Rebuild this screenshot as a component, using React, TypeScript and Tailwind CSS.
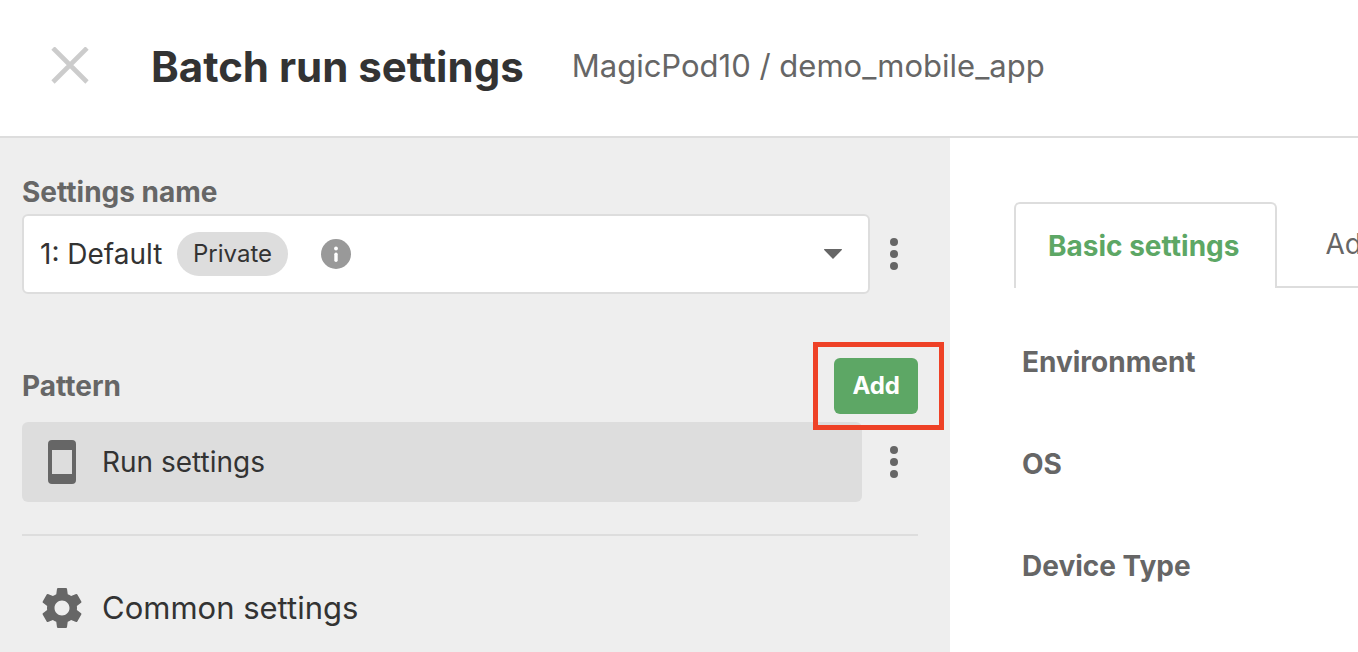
import { useState } from "react";
import type { ReactNode } from "react";
import { MdSettings } from "react-icons/md";

const fields = ["Environment", "OS", "Device Type"];

function KebabButton({ label }: { label: string }) {
  return (
    <button
      type="button"
      aria-label={label}
      className="flex h-20 w-12 shrink-0 items-center justify-center text-[#666]"
    >
      <svg width="8" height="32" viewBox="0 0 8 32" fill="currentColor">
        <circle cx="4" cy="4" r="4" />
        <circle cx="4" cy="16" r="4" />
        <circle cx="4" cy="28" r="4" />
      </svg>
    </button>
  );
}

function PhoneIcon() {
  return (
    <svg width="28" height="44" viewBox="0 0 28 44" fill="currentColor">
      <path
        fillRule="evenodd"
        d="M4 0h20a4 4 0 0 1 4 4v36a4 4 0 0 1-4 4H4a4 4 0 0 1-4-4V4a4 4 0 0 1 4-4zM4 10v24h20V10z"
      />
    </svg>
  );
}

function InfoIcon() {
  return (
    <svg width="30" height="30" viewBox="0 0 30 30">
      <circle cx="15" cy="15" r="15" fill="#999" />
      <circle cx="15" cy="9.5" r="1.9" fill="#fff" />
      <path d="M15 15.2v6" stroke="#fff" strokeWidth="3.4" strokeLinecap="round" />
    </svg>
  );
}

function IconSlot({ children }: { children: ReactNode }) {
  return (
    <span className="flex w-20 shrink-0 justify-center text-[#666]">
      {children}
    </span>
  );
}

export default function App() {
  const [setting, setSetting] = useState("1");

  return (
    <div className="flex min-h-screen flex-col overflow-hidden bg-white font-['Inter',sans-serif] text-[28px] text-[#333]">
      <header className="flex h-[138px] shrink-0 items-center border-b-2 border-[#ddd] pb-1 pl-[51px]">
        <button type="button" aria-label="Close" className="mr-[62px] text-[#ccc]">
          <svg width="38" height="38" viewBox="0 0 38 38" fill="none">
            <path d="M2 1l34 34M36 1L2 35" stroke="currentColor" strokeWidth="4.6" />
          </svg>
        </button>
        <h1 className="mr-12 whitespace-nowrap text-[42px] font-bold">
          Batch run settings
        </h1>
        <p className="whitespace-nowrap text-[31px] text-[#666]">
          MagicPod10 / demo_mobile_app
        </p>
      </header>

      <div className="flex flex-1">
        <aside className="min-w-0 flex-1 bg-[#eee] pt-8 pr-8 pl-[22px]">
          <label
            htmlFor="settings-name"
            className="block leading-[44px] font-bold text-[#666]"
          >
            Settings name
          </label>
          <div className="flex">
            <div className="relative flex-1">
              <select
                id="settings-name"
                value={setting}
                onChange={(e) => setSetting(e.target.value)}
                className="h-20 w-full appearance-none rounded-md border-2 border-[#ddd] bg-white px-4"
              >
                <option value="1">1: Default</option>
              </select>
              {/* badge, info mark and arrow sit on top of the select */}
              <div className="pointer-events-none absolute inset-y-0 right-7 left-[155px] flex items-center">
                <span className="mr-[33px] rounded-full bg-[#ddd] px-4 text-2xl leading-[44px]">
                  Private
                </span>
                <InfoIcon />
                <svg
                  className="ml-auto text-[#666]"
                  width="18"
                  height="10"
                  viewBox="0 0 18 10"
                  fill="currentColor"
                >
                  <path d="M.6 0h16.8c.6 0 .8.7.4 1.100L9 10 .2 1.100C-.2.7 0 0 .6 0z" />
                </svg>
              </div>
            </div>
            <KebabButton label="Settings menu" />
          </div>

          <div className="mt-16 flex items-center justify-between">
            <h2 className="font-bold text-[#666]">Pattern</h2>
            <div className="relative">
              <button
                type="button"
                className="block h-14 rounded-md bg-[#5da765] px-[18px] text-2xl font-bold text-white"
              >
                Add
              </button>
              <div className="pointer-events-none absolute -top-4 -right-[26px] -bottom-4 -left-[21px] border-5 border-[#ee4126]" />
            </div>
          </div>

          <div className="mt-2 flex border-b-2 border-[#ddd] pb-8">
            <button
              type="button"
              className="mr-2 flex h-20 flex-1 items-center rounded-md bg-[#ddd]"
            >
              <IconSlot>
                <PhoneIcon />
              </IconSlot>
              Run settings
            </button>
            <KebabButton label="Pattern menu" />
          </div>

          <button
            type="button"
            className="mt-8 flex h-20 w-full items-center text-[31px]"
          >
            <IconSlot>
              <MdSettings size={50} />
            </IconSlot>
            Common settings
          </button>
        </aside>

        <main className="w-[408px] shrink-0 overflow-hidden pt-16 pl-16">
          <div role="tablist" className="flex h-[86px]">
            <button
              type="button"
              role="tab"
              aria-selected="true"
              className="shrink-0 rounded-t-md border-2 border-b-0 border-[#ddd] pr-9 pl-8 font-bold whitespace-nowrap text-[#5da765]"
            >
              Basic settings
            </button>
            <button
              type="button"
              role="tab"
              aria-selected="false"
              className="shrink-0 border-b-2 border-[#ddd] px-12 text-[#666]"
            >
              Advanced
            </button>
          </div>
          <ul className="mt-6 pl-2 font-bold text-[#666]">
            {fields.map((field) => (
              <li key={field} className="mb-[2px] leading-[100px]">
                {field}
              </li>
            ))}
          </ul>
        </main>
      </div>
    </div>
  );
}
